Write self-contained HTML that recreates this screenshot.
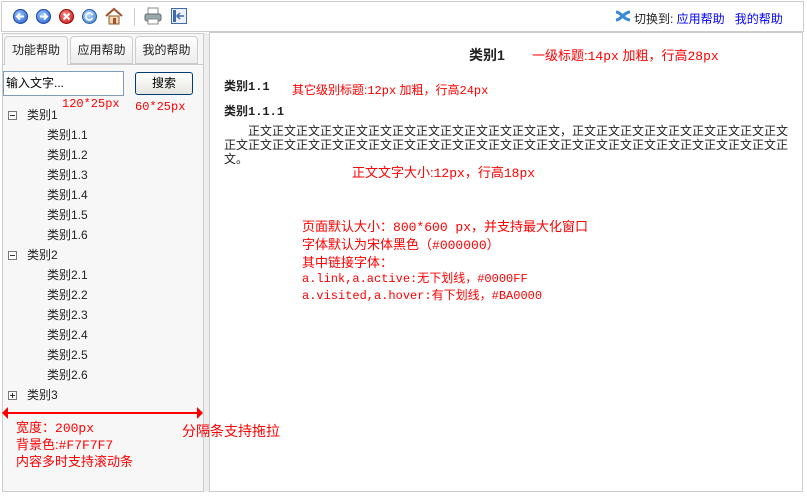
<!DOCTYPE html>
<html><head><meta charset="utf-8"><style>
*{margin:0;padding:0;box-sizing:border-box}
body{width:807px;height:496px;background:#fff;position:relative;overflow:hidden;font-family:"Liberation Sans","Noto Sans CJK SC",sans-serif;font-size:12px;color:#222}
.a{position:absolute;white-space:nowrap}
.r{color:#f00}
.m{font-family:"Liberation Mono","Noto Sans CJK SC",monospace}
.ic{position:absolute;top:9px;width:15px;height:15px;border-radius:50%}
.tree div{position:absolute;white-space:nowrap;font-size:12px;line-height:14px}
.tree .box{position:absolute;width:9px;height:9px;border:1px solid #777;background:#fff}
.box i{position:absolute;left:1px;top:3px;width:5px;height:1px;background:#333}
.box b{position:absolute;left:3px;top:1px;width:1px;height:5px;background:#333}
</style></head><body>
<!-- toolbar -->
<div class="a" style="left:1px;top:1px;width:803px;height:31px;border:1px solid #ccc;background:#fff"></div>
<div class="ic" style="left:13px;background:radial-gradient(circle at 40% 35%,#9cf,#2255cc);border:1px solid #1840a0"></div>
<svg class="a" style="left:15px;top:11px" width="11" height="11"><path d="M9 5.5 H2 M5 2.5 L2 5.5 L5 8.5" stroke="#fff" stroke-width="2" fill="none"/></svg>
<div class="ic" style="left:36px;background:radial-gradient(circle at 40% 35%,#9cf,#2255cc);border:1px solid #1840a0"></div>
<svg class="a" style="left:38px;top:11px" width="11" height="11"><path d="M2 5.5 H9 M6 2.5 L9 5.5 L6 8.5" stroke="#fff" stroke-width="2" fill="none"/></svg>
<div class="ic" style="left:59px;background:radial-gradient(circle at 40% 35%,#f88,#c01010);border:1px solid #900"></div>
<svg class="a" style="left:61px;top:11px" width="11" height="11"><path d="M2.5 2.5 L8.5 8.5 M8.5 2.5 L2.5 8.5" stroke="#fff" stroke-width="2"/></svg>
<div class="ic" style="left:82px;background:radial-gradient(circle at 40% 35%,#bdf,#3a7ad0);border:1px solid #2a5aa0"></div>
<svg class="a" style="left:84px;top:11px" width="11" height="11"><path d="M8.5 4 A3.5 3.5 0 1 0 8.5 7" stroke="#fff" stroke-width="1.6" fill="none"/></svg>
<svg class="a" style="left:105px;top:7px" width="18" height="18"><path d="M1 9 L9 2 L17 9" stroke="#a0522d" stroke-width="2" fill="none"/><rect x="4" y="9" width="10" height="8" fill="#f0d8b0" stroke="#8b5a2b"/><rect x="8" y="11" width="3" height="6" fill="#a0522d"/></svg>
<div class="a" style="left:134px;top:8px;width:1px;height:18px;background:#ccc"></div>
<svg class="a" style="left:144px;top:7px" width="18" height="18"><rect x="4" y="1" width="10" height="6" fill="#fff" stroke="#888"/><rect x="1" y="7" width="16" height="7" rx="2" fill="#9aa" stroke="#667"/><rect x="4" y="12" width="10" height="5" fill="#fff" stroke="#888"/></svg>
<svg class="a" style="left:171px;top:8px" width="16" height="16"><rect x="0.5" y="0.5" width="15" height="15" fill="#eef" stroke="#3a6ab0"/><rect x="2" y="2" width="3" height="12" fill="#3a6ab0"/><path d="M13 8 H7 M9 5 L6 8 L9 11" stroke="#3a6ab0" fill="none" stroke-width="1.5"/></svg>
<svg class="a" style="left:615px;top:9px" width="16" height="14"><path d="M1 3 C6 3 9 11 15 11 M1 11 C6 11 9 3 15 3" stroke="#3a8ad8" stroke-width="3" fill="none"/></svg>
<div class="a" style="left:634px;top:10px;font-size:12px;color:#222">切换到: <span style="color:#00f">应用帮助</span>&nbsp;&nbsp;&nbsp;<span style="color:#00f">我的帮助</span></div>

<!-- splitter -->
<div class="a" style="left:204px;top:33px;width:6px;height:459px;background:#eee"></div>
<!-- right panel -->
<div class="a" style="left:209px;top:31px;width:594px;height:461px;border:1px solid #ccc;border-top:2px solid #ccc;background:#fff"></div>

<!-- left panel -->
<div class="a" style="left:2px;top:33px;width:202px;height:459px;border:1px solid #ccc;background:#f7f7f7"></div>
<div class="a" style="left:3px;top:64px;width:200px;height:1px;background:#ccc"></div>
<div class="a" style="left:4px;top:36px;width:64px;height:29px;border:1px solid #ccc;border-bottom:none;border-radius:4px 4px 0 0;background:#f7f7f7;text-align:center;line-height:26px">功能帮助</div>
<div class="a" style="left:70px;top:36px;width:63px;height:28px;border:1px solid #ccc;border-radius:4px 4px 0 0;background:linear-gradient(#fff,#ececec);text-align:center;line-height:26px">应用帮助</div>
<div class="a" style="left:135px;top:36px;width:63px;height:28px;border:1px solid #ccc;border-radius:4px 4px 0 0;background:linear-gradient(#fff,#ececec);text-align:center;line-height:26px">我的帮助</div>
<div class="a" style="left:3px;top:71px;width:121px;height:25px;border:1px solid #7f9db9;background:#fff;line-height:23px;padding-left:2px;color:#000">输入文字...</div>
<div class="a" style="left:135px;top:72px;width:58px;height:23px;border:1px solid #003c74;border-radius:3px;background:linear-gradient(#fff,#e6e6e0);text-align:center;line-height:21px;color:#000">搜索</div>
<div class="a r m" style="left:62px;top:97px;font-size:12px">120*25px</div>
<div class="a r m" style="left:135px;top:100px;font-size:12px">60*25px</div>
<div class="tree">
<div class="box" style="left:8px;top:111px"><i></i></div><div style="left:27px;top:108px">类别1</div>
<div style="left:47px;top:128px">类别1.1</div><div style="left:47px;top:148px">类别1.2</div><div style="left:47px;top:168px">类别1.3</div><div style="left:47px;top:188px">类别1.4</div><div style="left:47px;top:208px">类别1.5</div><div style="left:47px;top:228px">类别1.6</div>
<div class="box" style="left:8px;top:251px"><i></i></div><div style="left:27px;top:248px">类别2</div>
<div style="left:47px;top:268px">类别2.1</div><div style="left:47px;top:288px">类别2.2</div><div style="left:47px;top:308px">类别2.3</div><div style="left:47px;top:328px">类别2.4</div><div style="left:47px;top:348px">类别2.5</div><div style="left:47px;top:368px">类别2.6</div>
<div class="box" style="left:8px;top:391px"><i></i><b></b></div><div style="left:27px;top:388px">类别3</div>
</div>
<!-- red arrow -->
<div class="a" style="left:6px;top:412px;width:194px;height:2px;background:#f00"></div>
<div class="a" style="left:2px;top:407px;width:0;height:0;border-top:6px solid transparent;border-bottom:6px solid transparent;border-right:6px solid #f00"></div>
<div class="a" style="left:197px;top:407px;width:0;height:0;border-top:6px solid transparent;border-bottom:6px solid transparent;border-left:6px solid #f00"></div>
<div class="a r" style="left:16px;top:420px;font-size:13px;line-height:16px">宽度：<span class="m">200px</span><br>背景色:<span class="m">#F7F7F7</span><br>内容多时支持滚动条</div>
<div class="a r" style="left:182px;top:421px;font-size:14px">分隔条支持拖拉</div>

<div class="a" style="left:469px;top:45px;font-size:14px;font-weight:bold;color:#222">类别1</div>
<div class="a r" style="left:532px;top:45px;font-size:13px">一级标题:<span class="m">14px</span> 加粗，行高<span class="m">28px</span></div>
<div class="a" style="left:224px;top:77px;font-weight:bold;color:#222">类别<span class="m">1.1</span></div>
<div class="a r" style="left:292px;top:81px;font-size:12px">其它级别标题:<span class="m">12px</span> 加粗，行高<span class="m">24px</span></div>
<div class="a" style="left:224px;top:102px;font-weight:bold;color:#222">类别<span class="m">1.1.1</span></div>
<div class="a" style="left:248px;top:124px;line-height:14px;color:#222">正文正文正文正文正文正文正文正文正文正文正文正文正文，正文正文正文正文正文正文正文正文正文</div>
<div class="a" style="left:224px;top:138px;line-height:14px;color:#222">正文正文正文正文正文正文正文正文正文正文正文正文正文正文正文正文正文正文正文正文正文正文正文正</div>
<div class="a" style="left:224px;top:152px;line-height:14px;color:#222">文。</div>
<div class="a r" style="left:352px;top:162px;font-size:13px">正文文字大小:<span class="m">12px</span>，行高<span class="m">18px</span></div>
<div class="a r" style="left:302px;top:218px;font-size:13px;line-height:17px">页面默认大小：<span class="m">800*600 px</span>，并支持最大化窗口<br>字体默认为宋体黑色（<span class="m">#000000</span>）<br>其中链接字体：</div>
<div class="a r" style="left:302px;top:270px;font-size:12px;line-height:16px"><span class="m">a.link,a.active:</span>无下划线，<span class="m">#0000FF</span><br><span class="m">a.visited,a.hover:</span>有下划线，<span class="m">#BA0000</span></div>
</body></html>
